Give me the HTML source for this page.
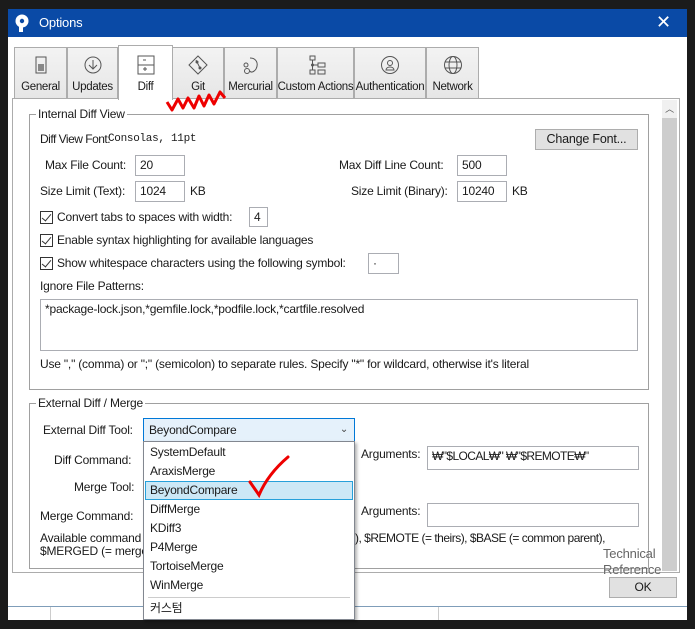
<!DOCTYPE html>
<html><head><meta charset="utf-8"><style>
*{box-sizing:border-box;margin:0;padding:0}
body{width:695px;height:629px;background:#1b1b1b;position:relative;overflow:hidden;font-family:"Liberation Sans","Noto Sans CJK KR",sans-serif;font-size:12px;color:#1a1a1a;letter-spacing:-0.2px}
.a{position:absolute;white-space:nowrap}
.tab{position:absolute;top:47px;height:52px;border:1px solid #acacac;border-bottom:none;background:linear-gradient(#f3f3f3,#e6e6e6);text-align:center;white-space:nowrap}
.tab span{position:absolute;left:-4px;right:-4px;top:33px;font-size:11.5px;letter-spacing:-0.3px}
.tab svg{position:absolute;left:50%;top:7px;margin-left:-10px}
.box{position:absolute;border:1px solid #abadb3;background:#fff;padding:2px 4px;font-size:12px;white-space:nowrap}
.grp{position:absolute;border:1px solid #a0a0a0}
.leg{position:absolute;background:#fff;padding:0 2px;top:-8px;left:6px;white-space:nowrap}
.cb{position:absolute;width:13px;height:13px;border:1px solid #333;background:#fff}
.cb:after{content:"";position:absolute;left:3px;top:0px;width:4px;height:8px;border:solid #333;border-width:0 1.5px 1.5px 0;transform:rotate(40deg)}
.it{position:absolute;left:1px;right:1px;height:19px;padding-left:5px;line-height:19px}
</style></head><body>
<div class="a" style="left:8px;top:9px;width:679px;height:611px;background:#fff"></div>
<div class="a" style="left:8px;top:9px;width:679px;height:28px;background:#0a4aa6"></div>
<svg class="a" style="left:13px;top:13px" width="20" height="22"><circle cx="9" cy="8" r="6.5" fill="#fff"/><rect x="6" y="8" width="4" height="11" fill="#fff"/><circle cx="9" cy="8" r="2.2" fill="#0a4aa6"/></svg>
<div class="a" style="left:39px;top:15px;color:#fff;font-size:13px">Options</div>
<div class="a" style="left:656px;top:12px;color:#fff;font-size:18px">✕</div>

<div class="tab" style="left:14px;width:53px"><svg width="20" height="20"><rect x="5" y="2" width="10" height="16" fill="none" stroke="#555"/><rect x="7" y="9" width="6" height="7" fill="#888"/></svg><span>General</span></div>
<div class="tab" style="left:67px;width:51px"><svg width="20" height="20"><circle cx="10" cy="10" r="8" fill="none" stroke="#555"/><path d="M10 5v9M6 10l4 4 4-4" fill="none" stroke="#555"/></svg><span>Updates</span></div>
<div class="tab" style="left:172px;width:52px"><svg width="20" height="20"><path d="M10 1l9 9-9 9-9-9z" fill="none" stroke="#555"/><circle cx="9" cy="7" r="1.5" fill="#555"/><circle cx="12" cy="13" r="1.5" fill="#555"/><path d="M8 5l4 8" stroke="#555"/></svg><span>Git</span></div>
<div class="tab" style="left:224px;width:53px"><svg width="20" height="20"><path d="M9 3c6 0 9 5 6 11-2 3-5 4-6 2" fill="none" stroke="#555"/><circle cx="5" cy="10" r="2" fill="none" stroke="#555"/><circle cx="6" cy="16" r="2.5" fill="none" stroke="#555"/></svg><span>Mercurial</span></div>
<div class="tab" style="left:277px;width:77px"><svg width="20" height="20"><rect x="4" y="1" width="5" height="4" fill="none" stroke="#555"/><rect x="4" y="15" width="5" height="4" fill="none" stroke="#555"/><rect x="12" y="8" width="7" height="4" fill="none" stroke="#555"/><rect x="12" y="15" width="7" height="4" fill="none" stroke="#555"/><path d="M6.5 5v10M6.5 10h5" stroke="#555"/><circle cx="6.5" cy="10" r="1.5" fill="#555"/></svg><span>Custom Actions</span></div>
<div class="tab" style="left:354px;width:72px"><svg width="20" height="20"><circle cx="10" cy="10" r="8.5" fill="none" stroke="#555"/><circle cx="10" cy="8" r="2.5" fill="none" stroke="#555"/><path d="M6 15c0-4 8-4 8 0z" fill="none" stroke="#555"/></svg><span>Authentication</span></div>
<div class="tab" style="left:426px;width:53px"><svg width="20" height="20"><circle cx="10" cy="10" r="8.5" fill="none" stroke="#555"/><ellipse cx="10" cy="10" rx="4" ry="8.5" fill="none" stroke="#555"/><path d="M2 7h16M2 13h16" stroke="#555"/></svg><span>Network</span></div>

<div class="a" style="left:12px;top:98px;width:668px;height:475px;border:1px solid #acacac;background:#fff"></div>
<div class="tab" style="left:118px;top:45px;width:55px;height:55px;background:#fff;z-index:2"><svg width="20" height="20" style="top:9px"><rect x="2" y="1" width="16" height="18" fill="none" stroke="#555"/><path d="M2 10h16M7 5h3M9 12v4M7 14h4" stroke="#555"/></svg><span style="top:35px">Diff</span></div>
<svg class="a" style="left:163px;top:90px;z-index:5" width="72" height="22"><path d="M4 12l5 8 6-11 5 9 5-10 6 10 5-12 5 10 5-11 5 9 6-12 5 6" fill="none" stroke="#e00" stroke-width="3" stroke-linejoin="round"/></svg>

<div class="a" style="left:662px;top:100px;width:15px;height:471px;background:#cdcdcd"></div>
<div class="a" style="left:662px;top:100px;width:15px;height:18px;background:#f0f0f0;color:#555;font-size:9px;text-align:center;line-height:18px">︿</div>

<div class="grp" style="left:29px;top:114px;width:620px;height:276px"><div class="leg">Internal Diff View</div></div>
<div class="a" style="left:40px;top:132px;letter-spacing:-0.5px">Diff View Font:</div>
<div class="a" style="left:108px;top:133px;font-family:'Liberation Mono',monospace;font-size:11px;letter-spacing:-0.3px">Consolas, 11pt</div>
<div class="a" style="left:535px;top:129px;width:103px;height:21px;border:1px solid #adadad;background:#e1e1e1;text-align:center;line-height:19px;font-size:12.5px">Change Font...</div>
<div class="a" style="left:45px;top:158px">Max File Count:</div>
<div class="box" style="left:135px;top:155px;width:50px;height:21px">20</div>
<div class="a" style="left:339px;top:158px">Max Diff Line Count:</div>
<div class="box" style="left:457px;top:155px;width:50px;height:21px">500</div>
<div class="a" style="left:40px;top:184px">Size Limit (Text):</div>
<div class="box" style="left:135px;top:181px;width:50px;height:21px">1024</div>
<div class="a" style="left:190px;top:184px">KB</div>
<div class="a" style="left:351px;top:184px">Size Limit (Binary):</div>
<div class="box" style="left:457px;top:181px;width:50px;height:21px">10240</div>
<div class="a" style="left:512px;top:184px">KB</div>
<div class="cb" style="left:40px;top:211px"></div><div class="a" style="left:57px;top:210px">Convert tabs to spaces with width:</div>
<div class="box" style="left:249px;top:207px;width:19px;height:20px">4</div>
<div class="cb" style="left:40px;top:234px"></div><div class="a" style="left:57px;top:233px">Enable syntax highlighting for available languages</div>
<div class="cb" style="left:40px;top:257px"></div><div class="a" style="left:57px;top:256px">Show whitespace characters using the following symbol:</div>
<div class="box" style="left:368px;top:253px;width:31px;height:21px">·</div>
<div class="a" style="left:40px;top:279px">Ignore File Patterns:</div>
<div class="box" style="left:40px;top:299px;width:598px;height:52px">*package-lock.json,*gemfile.lock,*podfile.lock,*cartfile.resolved</div>
<div class="a" style="left:40px;top:357px">Use "," (comma) or ";" (semicolon) to separate rules. Specify "*" for wildcard, otherwise it's literal</div>

<div class="grp" style="left:29px;top:403px;width:620px;height:166px"><div class="leg">External Diff / Merge</div></div>
<div class="a" style="left:43px;top:423px">External Diff Tool:</div>
<div class="a" style="left:54px;top:453px">Diff Command:</div>
<div class="a" style="left:74px;top:480px">Merge Tool:</div>
<div class="a" style="left:40px;top:509px">Merge Command:</div>
<div class="a" style="left:361px;top:447px">Arguments:</div>
<div class="box" style="left:427px;top:446px;width:212px;height:24px;letter-spacing:-0.6px">₩"$LOCAL₩" ₩"$REMOTE₩"</div>
<div class="a" style="left:361px;top:504px">Arguments:</div>
<div class="box" style="left:427px;top:503px;width:212px;height:24px"></div>
<div class="a" style="left:40px;top:531px">Available command</div>
<div class="a" style="left:355px;top:531px;letter-spacing:-0.5px">), $REMOTE (= theirs), $BASE (= common parent),</div>
<div class="a" style="left:40px;top:544px">$MERGED (= merge</div>

<div class="a" style="left:609px;top:577px;width:68px;height:21px;border:1px solid #adadad;background:#e1e1e1;text-align:center;line-height:19px">OK</div>
<div class="a" style="left:603px;top:546px;color:#666;font-size:13px;line-height:16px;text-shadow:0 0 1px #fff">Technical<br>Reference</div>
<div class="a" style="left:8px;top:606px;width:679px;height:14px;border-top:1px solid #7f9db9;background:#fff"></div>
<div class="a" style="left:50px;top:607px;width:1px;height:13px;background:#ccc"></div>
<div class="a" style="left:438px;top:607px;width:1px;height:13px;background:#ccc"></div>

<div class="a" style="left:143px;top:418px;width:212px;height:24px;border:1px solid #0078d7;background:#e5f1fb;padding-left:5px;line-height:22px;z-index:10">BeyondCompare<span style="position:absolute;right:6px;top:0;font-size:10px;color:#444">⌄</span></div>
<div class="a" style="left:143px;top:441px;width:212px;height:179px;border:1px solid #828790;background:#fff;box-shadow:2px 2px 3px rgba(0,0,0,.3);z-index:10">
<div class="it" style="top:1px">SystemDefault</div>
<div class="it" style="top:20px">AraxisMerge</div>
<div class="it" style="top:39px;background:#cce8f6;border:1px solid #26a0da;line-height:17px;padding-left:4px">BeyondCompare</div>
<div class="it" style="top:58px">DiffMerge</div>
<div class="it" style="top:77px">KDiff3</div>
<div class="it" style="top:96px">P4Merge</div>
<div class="it" style="top:115px">TortoiseMerge</div>
<div class="it" style="top:134px">WinMerge</div>
<div class="a" style="left:4px;right:4px;top:155px;height:1px;background:#ccc"></div>
<div class="it" style="top:157px">커스텀</div>
</div>
<svg class="a" style="left:245px;top:455px;z-index:11" width="50" height="45"><path d="M5 27l9 13c6-14 16-27 29-38" fill="none" stroke="#e00" stroke-width="3" stroke-linecap="round"/></svg>
</body></html>
